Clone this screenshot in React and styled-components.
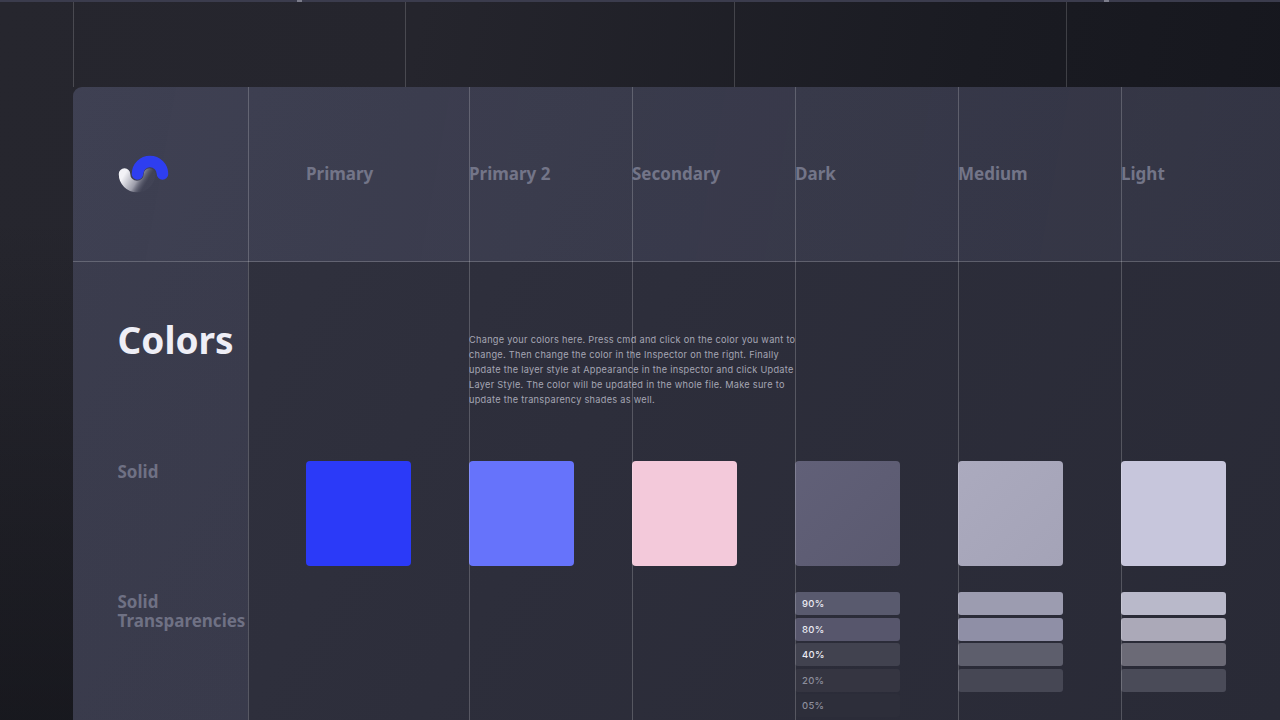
import React from 'react';
import styled, { createGlobalStyle } from 'styled-components';

const GlobalStyle = createGlobalStyle`
  html, body {
    margin: 0;
    padding: 0;
    background: #17181e;
  }
  * {
    box-sizing: border-box;
  }
`;

const headingFont = `'Noto Sans', 'Open Sans', sans-serif`;
const columnTracks = '175px 58px repeat(6, 163px)';

const Page = styled.div`
  width: 1280px;
  height: 720px;
  overflow: hidden;
  display: flex;
  flex-direction: column;
  background:
    linear-gradient(180deg, transparent 30%, rgba(10, 11, 15, 0.5) 100%),
    linear-gradient(100deg, #26262e 0%, #25252d 30%, #1a1b22 70%, #15161d 100%);
`;

const TopRule = styled.div`
  flex: none;
  height: 2px;
  display: flex;
  background: #3b3c4d;
  padding-left: 297px;
  gap: 802px;
`;

const RuleMark = styled.span`
  width: 5px;
  background: #7c7d8b;
`;

const Backdrop = styled.div`
  flex: none;
  height: 85px;
  margin-left: 73px;
  display: grid;
  grid-template-columns: 332px 329px 332px 1fr;
`;

const BackdropCell = styled.div`
  border-left: 1px solid rgba(255, 255, 255, 0.17);
`;

const Board = styled.div`
  position: relative;
  flex: 1;
  margin-left: 73px;
  border-radius: 9px 0 0 0;
  overflow: hidden;
  display: flex;
  flex-direction: column;
  background: linear-gradient(120deg, #31323f 0%, #2d2e3b 45%, #292a36 100%);
`;

const Header = styled.header`
  flex: none;
  height: 175px;
  display: grid;
  grid-template-columns: ${columnTracks};
  align-items: center;
  border-bottom: 1px solid rgba(255, 255, 255, 0.2);
  background: linear-gradient(100deg, rgba(135, 140, 185, 0.16), rgba(135, 140, 185, 0.09));
`;

const LogoCell = styled.div`
  grid-column: 1 / 3;
  padding-left: 45px;
  display: flex;
`;

const ColumnName = styled.div`
  font-family: ${headingFont};
  font-size: 17px;
  font-weight: 700;
  color: #737588;
  white-space: nowrap;
  padding-bottom: 2px;
`;

const Body = styled.div`
  flex: 1;
  display: grid;
  grid-template-columns: ${columnTracks};
  grid-template-rows: 199px 131px 1fr;
  background: linear-gradient(90deg, rgba(135, 140, 185, 0.12) 175px, transparent 175px);
`;

const RowTitle = styled.h1`
  margin: 0;
  grid-column: 1 / 3;
  padding: 53px 0 0 44.5px;
  font-family: ${headingFont};
  font-size: 37px;
  line-height: 50px;
  font-weight: 700;
  color: #eeeef6;
`;

const Intro = styled.p`
  margin: 0;
  grid-column: 4 / 6;
  padding-top: 70px;
  width: 328px;
  font-family: Inter, sans-serif;
  font-size: 9.2px;
  line-height: 15px;
  letter-spacing: 0.28px;
  color: #a5a6b4;
`;

const RowLabel = styled.div`
  grid-column: 1 / 3;
  padding: ${(props) => props.top || 0}px 0 0 44.5px;
  font-family: ${headingFont};
  font-size: 17px;
  line-height: 19px;
  font-weight: 700;
  color: #6f7184;
`;

const Swatch = styled.div`
  width: 105px;
  height: 105px;
  border-radius: 4px;
  background: ${(props) => props.color};
`;

const BarStack = styled.div`
  display: flex;
  flex-direction: column;
  gap: 2.6px;
`;

const Bar = styled.div`
  width: 105px;
  height: 23px;
  border-radius: 3px;
  padding-left: 7px;
  display: flex;
  align-items: center;
  background: ${(props) => props.color};
  font-family: Inter, sans-serif;
  font-size: 9.5px;
  font-weight: 500;
  letter-spacing: 0.3px;
  color: ${(props) => (props.dim ? '#8c8d9b' : '#ebebf3')};
`;

const Lines = styled.div`
  position: absolute;
  inset: 0;
  display: grid;
  grid-template-columns: 175px 221px repeat(6, 163px);
  pointer-events: none;
`;

const Line = styled.div`
  border-left: 1px solid rgba(255, 255, 255, 0.2);

  &:first-child {
    border-left: 0;
  }
`;

const colors = [
  { name: 'Primary', swatch: '#2b3af8' },
  { name: 'Primary 2', swatch: '#6673fb' },
  { name: 'Secondary', swatch: '#f3c9da' },
  {
    name: 'Dark',
    swatch: 'linear-gradient(135deg, #616078, #5b5a70)',
    bars: [
      { color: '#595a6e', label: '90%' },
      { color: '#57566c', label: '80%' },
      { color: '#41424f', label: '40%' },
      { color: '#353541', label: '20%', dim: true },
      { color: '#2d2e3a', label: '05%', dim: true },
    ],
  },
  {
    name: 'Medium',
    swatch: 'linear-gradient(135deg, #abaabe, #a4a3b7)',
    bars: [
      { color: '#9c9cb0' },
      { color: '#8f8fa6' },
      { color: '#5d5e6c' },
      { color: '#464754' },
    ],
  },
  {
    name: 'Light',
    swatch: '#c7c6dc',
    bars: [
      { color: '#b9b9ca' },
      { color: '#aba9b8' },
      { color: '#6b6a76' },
      { color: '#4a4b58' },
    ],
  },
];

const Logo = () => (
  <svg width="52" height="42" viewBox="0 0 52 42" fill="none">
    <defs>
      <linearGradient id="logoFade" x1="0" y1="0" x2="1" y2="0.3">
        <stop offset="0" stopColor="#f2f2f6" />
        <stop offset="0.6" stopColor="#9c9daa" />
        <stop offset="1" stopColor="#4a4c5e" stopOpacity="0.3" />
      </linearGradient>
    </defs>
    <path d="M6.5 21 A12.5 12.5 0 0 0 31.5 21" stroke="url(#logoFade)" strokeWidth="11.5" strokeLinecap="round" />
    <path d="M19.5 21 A12.5 12.5 0 0 1 44.5 21" stroke="#2e3ef0" strokeWidth="11.5" strokeLinecap="round" />
  </svg>
);

const App = () => (
  <>
    <GlobalStyle />
    <Page>
      <TopRule>
        <RuleMark />
        <RuleMark />
      </TopRule>
      <Backdrop>
        <BackdropCell />
        <BackdropCell />
        <BackdropCell />
        <BackdropCell />
      </Backdrop>
      <Board>
        <Header>
          <LogoCell>
            <Logo />
          </LogoCell>
          {colors.map((c) => (
            <ColumnName key={c.name}>{c.name}</ColumnName>
          ))}
        </Header>
        <Body>
          <RowTitle>Colors</RowTitle>
          <span />
          <Intro>
            Change your colors here. Press cmd and click on the color you want to change. Then
            change the color in the Inspector on the right. Finally update the layer style at
            Appearance in the inspector and click Update Layer Style. The color will be updated in
            the whole file. Make sure to update the transparency shades as well.
          </Intro>
          <span />
          <span />
          <RowLabel top={1}>Solid</RowLabel>
          {colors.map((c) => (
            <Swatch key={c.name} color={c.swatch} />
          ))}
          <RowLabel>
            Solid
            <br />
            Transparencies
          </RowLabel>
          {colors.map((c) => (
            <BarStack key={c.name}>
              {(c.bars || []).map((b) => (
                <Bar key={b.color} color={b.color} dim={b.dim}>
                  {b.label}
                </Bar>
              ))}
            </BarStack>
          ))}
        </Body>
        <Lines>
          {Array.from({ length: 8 }, (_, i) => (
            <Line key={i} />
          ))}
        </Lines>
      </Board>
    </Page>
  </>
);

export default App;
